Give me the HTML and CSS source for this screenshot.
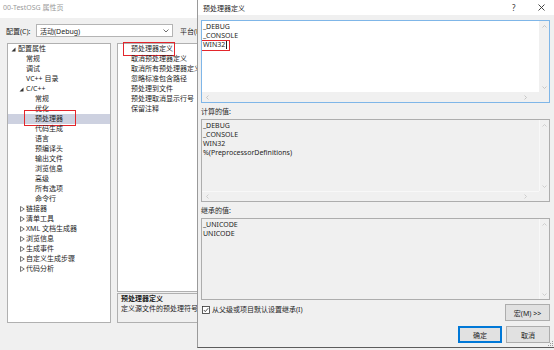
FILE: index.html
```html
<!DOCTYPE html>
<html lang="zh-CN">
<head>
  <meta charset="UTF-8" />
  <title>00-TestOSG 属性页</title>
  <link rel="stylesheet" href="styles.css">
</head>
<body>
  <div class="window">
    <div class="titlebar">00-TestOSG 属性页</div>

    <div class="config-row">
      <span class="config-label">配置(C):</span>
      <div class="select">
        <span>活动(Debug)</span>
        <svg class="chevron" width="6" height="4" viewBox="0 0 6 4"><polyline points="0.5,0.5 3,3 5.5,0.5" fill="none" stroke="#606060" stroke-width="0.9"/></svg>
      </div>
      <span class="platform-label">平台(P):</span>
    </div>

    <div class="panes">
      <!-- property tree -->
      <ul class="tree">
        <li class="l0"><span class="tog open"><svg width="5" height="5" viewBox="0 0 5 5"><polygon points="4.5,0.5 4.5,4.5 0.5,4.5" fill="#333"/></svg></span>配置属性</li>
        <li class="l1"><span class="tog"></span>常规</li>
        <li class="l1"><span class="tog"></span>调试</li>
        <li class="l1"><span class="tog"></span>VC++ 目录</li>
        <li class="l1"><span class="tog open"><svg width="5" height="5" viewBox="0 0 5 5"><polygon points="4.5,0.5 4.5,4.5 0.5,4.5" fill="#333"/></svg></span>C/C++</li>
        <li class="l2"><span class="tog"></span>常规</li>
        <li class="l2"><span class="tog"></span>优化</li>
        <li class="l2 sel"><span class="tog"></span>预处理器<span class="mark mark-tree"></span></li>
        <li class="l2"><span class="tog"></span>代码生成</li>
        <li class="l2"><span class="tog"></span>语言</li>
        <li class="l2"><span class="tog"></span>预编译头</li>
        <li class="l2"><span class="tog"></span>输出文件</li>
        <li class="l2"><span class="tog"></span>浏览信息</li>
        <li class="l2"><span class="tog"></span>高级</li>
        <li class="l2"><span class="tog"></span>所有选项</li>
        <li class="l2"><span class="tog"></span>命令行</li>
        <li class="l1"><span class="tog shut"><svg width="5" height="6" viewBox="0 0 5 6"><polygon points="0.5,0.5 4.3,3 0.5,5.5" fill="none" stroke="#555" stroke-width="0.8"/></svg></span>链接器</li>
        <li class="l1"><span class="tog shut"><svg width="5" height="6" viewBox="0 0 5 6"><polygon points="0.5,0.5 4.3,3 0.5,5.5" fill="none" stroke="#555" stroke-width="0.8"/></svg></span>清单工具</li>
        <li class="l1"><span class="tog shut"><svg width="5" height="6" viewBox="0 0 5 6"><polygon points="0.5,0.5 4.3,3 0.5,5.5" fill="none" stroke="#555" stroke-width="0.8"/></svg></span>XML 文档生成器</li>
        <li class="l1"><span class="tog shut"><svg width="5" height="6" viewBox="0 0 5 6"><polygon points="0.5,0.5 4.3,3 0.5,5.5" fill="none" stroke="#555" stroke-width="0.8"/></svg></span>浏览信息</li>
        <li class="l1"><span class="tog shut"><svg width="5" height="6" viewBox="0 0 5 6"><polygon points="0.5,0.5 4.3,3 0.5,5.5" fill="none" stroke="#555" stroke-width="0.8"/></svg></span>生成事件</li>
        <li class="l1"><span class="tog shut"><svg width="5" height="6" viewBox="0 0 5 6"><polygon points="0.5,0.5 4.3,3 0.5,5.5" fill="none" stroke="#555" stroke-width="0.8"/></svg></span>自定义生成步骤</li>
        <li class="l1"><span class="tog shut"><svg width="5" height="6" viewBox="0 0 5 6"><polygon points="0.5,0.5 4.3,3 0.5,5.5" fill="none" stroke="#555" stroke-width="0.8"/></svg></span>代码分析</li>
      </ul>

      <!-- property grid -->
      <div class="props">
        <ul class="prop-list">
          <li>预处理器定义<span class="mark mark-prop"></span></li>
          <li>取消预处理器定义</li>
          <li>取消所有预处理器定义</li>
          <li>忽略标准包含路径</li>
          <li>预处理到文件</li>
          <li>预处理取消显示行号</li>
          <li>保留注释</li>
        </ul>
        <div class="prop-desc">
          <div class="desc-title">预处理器定义</div>
          <div>定义源文件的预处理符号。</div>
        </div>
      </div>
    </div>
  </div>

  <!-- editor dialog -->
  <div class="dialog">
    <div class="dlg-title">
      <span class="dlg-name">预处理器定义</span>
      <span class="dlg-help">?</span>
      <svg class="dlg-close" width="7" height="7" viewBox="0 0 7 7"><path d="M0.5 0.5 L6.5 6.5 M6.5 0.5 L0.5 6.5" stroke="#333" stroke-width="0.9"/></svg>
    </div>

    <div class="dlg-body">
      <div class="field field-edit">
        <div class="field-text">
          <div>_DEBUG</div>
          <div>_CONSOLE</div>
          <div class="line-win32">WIN32<span class="caret"></span><span class="mark mark-win32"></span></div>
        </div>
        <div class="vscroll">
          <svg width="5" height="3" viewBox="0 0 5 3"><polyline points="0.5,2.5 2.5,0.5 4.5,2.5" fill="none" stroke="#bbb" stroke-width="0.8"/></svg>
          <svg width="5" height="3" viewBox="0 0 5 3"><polyline points="0.5,0.5 2.5,2.5 4.5,0.5" fill="none" stroke="#bbb" stroke-width="0.8"/></svg>
        </div>
        <div class="hscroll">
          <svg width="3" height="5" viewBox="0 0 3 5"><polyline points="2.5,0.5 0.5,2.5 2.5,4.5" fill="none" stroke="#bbb" stroke-width="0.8"/></svg>
          <svg width="3" height="5" viewBox="0 0 3 5"><polyline points="0.5,0.5 2.5,2.5 0.5,4.5" fill="none" stroke="#bbb" stroke-width="0.8"/></svg>
        </div>
        <div class="corner"></div>
      </div>

      <div class="field-label">计算的值:</div>
      <div class="field field-ro">
        <div class="field-text">
          <div>_DEBUG</div>
          <div>_CONSOLE</div>
          <div>WIN32</div>
          <div>%(PreprocessorDefinitions)</div>
        </div>
        <div class="vscroll">
          <svg width="5" height="3" viewBox="0 0 5 3"><polyline points="0.5,2.5 2.5,0.5 4.5,2.5" fill="none" stroke="#c4c4c4" stroke-width="0.8"/></svg>
          <svg width="5" height="3" viewBox="0 0 5 3"><polyline points="0.5,0.5 2.5,2.5 4.5,0.5" fill="none" stroke="#c4c4c4" stroke-width="0.8"/></svg>
        </div>
        <div class="hscroll">
          <svg width="3" height="5" viewBox="0 0 3 5"><polyline points="2.5,0.5 0.5,2.5 2.5,4.5" fill="none" stroke="#c4c4c4" stroke-width="0.8"/></svg>
          <svg width="3" height="5" viewBox="0 0 3 5"><polyline points="0.5,0.5 2.5,2.5 0.5,4.5" fill="none" stroke="#c4c4c4" stroke-width="0.8"/></svg>
        </div>
        <div class="corner"></div>
      </div>

      <div class="field-label">继承的值:</div>
      <div class="field field-ro field-inherit">
        <div class="field-text">
          <div>_UNICODE</div>
          <div>UNICODE</div>
        </div>
        <div class="vscroll">
          <svg width="5" height="3" viewBox="0 0 5 3"><polyline points="0.5,2.5 2.5,0.5 4.5,2.5" fill="none" stroke="#c4c4c4" stroke-width="0.8"/></svg>
          <svg width="5" height="3" viewBox="0 0 5 3"><polyline points="0.5,0.5 2.5,2.5 4.5,0.5" fill="none" stroke="#c4c4c4" stroke-width="0.8"/></svg>
        </div>
      </div>

      <div class="inherit-row">
        <label class="check">
          <svg width="8" height="8" viewBox="0 0 8 8"><rect x="0.5" y="0.5" width="7" height="7" fill="#fff" stroke="#333" stroke-width="0.8"/><polyline points="1.8,4 3.3,5.6 6.2,2.2" fill="none" stroke="#222" stroke-width="0.8"/></svg>
          <span>从父级或项目默认设置继承(I)</span>
        </label>
        <button class="btn btn-macro">宏(M) &gt;&gt;</button>
      </div>

      <div class="btn-row">
        <button class="btn btn-default">确定</button>
        <button class="btn">取消</button>
      </div>
    </div>

    <svg class="grip" width="5" height="5" viewBox="0 0 5 5"><rect x="4" y="0" width="1" height="1" fill="#999"/><rect x="2" y="2" width="1" height="1" fill="#999"/><rect x="4" y="2" width="1" height="1" fill="#999"/><rect x="0" y="4" width="1" height="1" fill="#999"/><rect x="2" y="4" width="1" height="1" fill="#999"/><rect x="4" y="4" width="1" height="1" fill="#999"/></svg>
  </div>
</body>
</html>
```

FILE: styles.css
```css
* {
  box-sizing: border-box;
}

body {
  margin: 0;
  width: 554px;
  height: 350px;
  overflow: hidden;
  position: relative;
  background-color: #f0f0f0;
  font-family: "Noto Sans", "Noto Sans CJK SC", sans-serif;
  font-size: 7px;
  color: #1e1e1e;
}

ul {
  list-style: none;
  margin: 0;
  padding: 0;
}

/* background property page */

.titlebar {
  height: 18px;
  line-height: 16px;
  padding-left: 3px;
  background-color: #ffffff;
  color: #9a9a9a;
}

.config-row {
  display: flex;
  align-items: center;
  height: 25px;
  padding-left: 6px;
}

.config-label {
  width: 30px;
}

.select {
  width: 137px;
  height: 13px;
  display: flex;
  align-items: center;
  justify-content: space-between;
  padding: 0 3px;
  background-color: #ffffff;
  border: 1px solid #b4b4b4;
}

.platform-label {
  margin-left: 7px;
}

.panes {
  display: flex;
  gap: 6px;
  padding-left: 7px;
  height: 280px;
}

.tree {
  width: 104px;
  height: 280px;
  background-color: #ffffff;
  border: 1px solid #b0b0b0;
}

.tree li {
  position: relative;
  display: flex;
  align-items: center;
  height: 10px;
  line-height: 10px;
  white-space: nowrap;
}

.tree .l0 { padding-left: 2px; }
.tree .l1 { padding-left: 10px; }
.tree .l2 { padding-left: 19px; }

.tree li.sel {
  background-color: #cdd1e0;
}

.tog {
  flex: none;
  width: 8px;
  height: 10px;
  display: flex;
  align-items: center;
}

.tog.open { padding-left: 1px; }
.tog.shut { padding-left: 2px; }

.props {
  width: 240px;
  display: flex;
  flex-direction: column;
  gap: 1px;
}

.prop-list {
  height: 249px;
  background-color: #ffffff;
  border: 1px solid #b0b0b0;
}

.prop-list li {
  position: relative;
  height: 10px;
  line-height: 10px;
  padding-left: 13px;
  white-space: nowrap;
}

.prop-desc {
  height: 30px;
  padding-left: 3px;
  line-height: 10px;
  border: 1px solid #b0b0b0;
  white-space: nowrap;
}

.desc-title {
  font-weight: bold;
}

/* red annotation boxes */

.mark {
  position: absolute;
  border: 1px solid #e3262c;
  pointer-events: none;
}

.mark-tree {
  left: 16px;
  top: -4px;
  width: 52px;
  height: 16px;
}

.mark-prop {
  left: 5px;
  top: -2px;
  width: 52px;
  height: 14px;
}

.mark-win32 {
  left: -3px;
  top: 0;
  width: 30px;
  height: 11px;
}

/* dialog */

.dialog {
  position: absolute;
  left: 197px;
  top: 0;
  width: 357px;
  height: 348px;
  display: flex;
  flex-direction: column;
  background-color: #f0f0f0;
  border-left: 1px solid #9a9a9a;
  border-bottom: 1px solid #5c5c5c;
}

.dlg-title {
  height: 15px;
  display: flex;
  align-items: center;
  padding-left: 5px;
  background-color: #ffffff;
  color: #1e1e1e;
}

.dlg-name {
  flex: 1;
}

.dlg-help {
  width: 10px;
  font-size: 8px;
  color: #333;
}

.dlg-close {
  margin: 0 9px 0 16px;
}

.dlg-body {
  flex: 1;
  display: flex;
  flex-direction: column;
  padding: 5px 4px 0 3px;
}

.field {
  height: 83px;
  display: grid;
  grid-template-columns: 1fr 10px;
  grid-template-rows: 1fr 10px;
  border: 1px solid #adadad;
  background-color: #f0f0f0;
}

.field-edit {
  border-color: #7fb6e8;
  background-color: #ffffff;
}

.field-inherit {
  height: 82px;
  grid-template-rows: 1fr;
}

.field-text {
  padding: 1px 0 0 1px;
  line-height: 9px;
  color: #1e1e1e;
  white-space: nowrap;
  overflow: hidden;
}

.line-win32 {
  position: relative;
  display: flex;
  align-items: center;
}

.caret {
  width: 1px;
  height: 8px;
  margin-left: 1px;
  background-color: #222;
}

.vscroll {
  display: flex;
  flex-direction: column;
  justify-content: space-between;
  align-items: center;
  padding: 4px 0 3px;
  background-color: #f0f0f0;
}

.field-ro .vscroll {
  border-left: 1px solid #f8f8f8;
}

.hscroll {
  display: flex;
  justify-content: space-between;
  align-items: center;
  padding: 0 12px 0 4px;
  background-color: #f0f0f0;
}

.field-ro .hscroll {
  border-top: 1px solid #f8f8f8;
}

.corner {
  background-color: #f0f0f0;
}

.field-label {
  height: 16px;
  padding-top: 2px;
  line-height: 14px;
}

.inherit-row {
  display: flex;
  justify-content: space-between;
  align-items: flex-start;
  margin-top: 4px;
}

.check {
  display: flex;
  align-items: center;
  gap: 2px;
  margin: 2px 0 0 1px;
  line-height: 8px;
}

.btn {
  width: 45px;
  height: 17px;
  padding: 0;
  font-family: inherit;
  font-size: 7px;
  color: #1e1e1e;
  background-color: #e1e1e1;
  border: 1px solid #adadad;
}

.btn-row {
  display: flex;
  justify-content: flex-end;
  gap: 4px;
  margin-top: 5px;
}

.btn-row .btn {
  width: 44px;
}

.btn-default {
  border: 1px solid #0078d7;
  box-shadow: inset 0 0 0 1px #0078d7;
}

.grip {
  position: absolute;
  right: 1px;
  bottom: 1px;
}
```
